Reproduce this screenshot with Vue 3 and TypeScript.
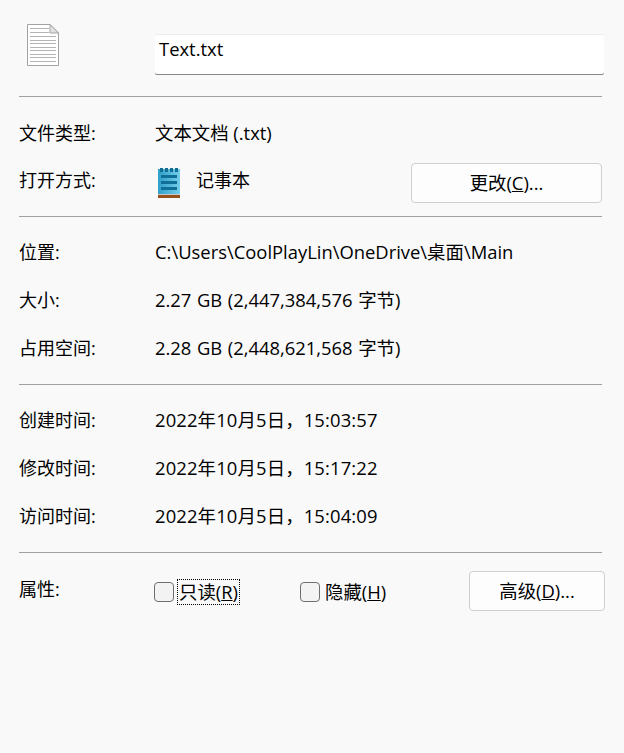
<script setup lang="ts">
interface Row { label: string; value: string }
const locationRows: Row[] = [
  { label: '位置:', value: 'C:\\Users\\CoolPlayLin\\OneDrive\\桌面\\Main' },
  { label: '大小:', value: '2.27 GB (2,447,384,576 字节)' },
  { label: '占用空间:', value: '2.28 GB (2,448,621,568 字节)' },
]
const timeRows: Row[] = [
  { label: '创建时间:', value: '2022年10月5日\uFF0C15:03:57' },
  { label: '修改时间:', value: '2022年10月5日\uFF0C15:17:22' },
  { label: '访问时间:', value: '2022年10月5日\uFF0C15:04:09' },
]
const docLines = [4.5, 8.5, 12.5, 16.5, 19.5, 23.5, 26.5, 30.5, 33.5, 37.5]
</script>

<template>
  <main class="page">
    <section class="head">
      <svg class="file-icon" width="32" height="42" viewBox="0 0 32 42">
        <path d="M0.5 0.5H23L31.5 9V41.5H0.5Z" fill="#fff" stroke="#a3a3a3" />
        <path d="M23 0.5V9H31.5Z" fill="#e2e2e2" stroke="#a3a3a3" />
        <path
          v-for="y in docLines"
          :key="y"
          :d="`M3 ${y}H${y < 9 ? 22 : 29}`"
          stroke="#b4b4b4"
        />
      </svg>
      <div class="name-box">Text.txt</div>
    </section>
    <hr />
    <section class="block">
      <div class="row row-type">
        <span class="label">文件类型:</span>
        <span>文本文档 (.txt)</span>
      </div>
      <div class="row row-open">
        <span class="label raised">打开方式:</span>
        <svg class="pad-icon" width="22" height="30" viewBox="0 0 22 30">
          <defs>
            <linearGradient id="padFill" x1="0" y1="0" x2="1" y2="0">
              <stop offset="0" stop-color="#2f9fc9" />
              <stop offset="1" stop-color="#74cdea" />
            </linearGradient>
          </defs>
          <rect x="0" y="1" width="22" height="25" fill="url(#padFill)" />
          <rect x="0" y="26" width="22" height="1" fill="#c9c9c9" />
          <rect x="0" y="27" width="22" height="3" fill="#96501c" />
          <g fill="#116f97">
            <rect x="2" y="0" width="3" height="4" />
            <rect x="7" y="0" width="3" height="4" />
            <rect x="12" y="0" width="3" height="4" />
            <rect x="17" y="0" width="3" height="4" />
            <rect x="3" y="7" width="16" height="3" />
            <rect x="3" y="13" width="16" height="3" />
            <rect x="3" y="19" width="16" height="3" />
          </g>
        </svg>
        <span class="app-name raised">记事本</span>
        <button class="btn change" type="button">更改(<u>C</u>)...</button>
      </div>
    </section>
    <hr />
    <section class="block triple">
      <div v-for="r in locationRows" :key="r.label" class="row tall">
        <span class="label">{{ r.label }}</span>
        <span class="spaced">{{ r.value }}</span>
      </div>
    </section>
    <hr />
    <section class="block triple">
      <div v-for="r in timeRows" :key="r.label" class="row tall">
        <span class="label">{{ r.label }}</span>
        <span class="stamp">{{ r.value }}</span>
      </div>
    </section>
    <hr />
    <section class="attrs">
      <span class="label attr-label">属性:</span>
      <label class="check readonly">
        <span class="box"></span>
        <span class="focus">只读(<u>R</u>)</span>
      </label>
      <label class="check hidden-attr">
        <span class="box"></span>
        <span>隐藏(<u>H</u>)</span>
      </label>
      <button class="btn advanced" type="button">高级(<u>D</u>)...</button>
    </section>
  </main>
</template>

<style scoped>
.page {
  box-sizing: border-box;
  width: 624px;
  height: 753px;
  padding: 24px 22px 0 19px;
  background: #f9f9f9;
  color: #000;
  font-family: "Open Sans", "Noto Sans CJK SC", sans-serif;
  font-size: 18.4px;
  line-height: 24px;
  overflow: hidden;
}
hr {
  height: 1px;
  margin: 0;
  border: 0;
  background: #a0a0a0;
}
.head {
  display: flex;
  align-items: flex-start;
  height: 72px;
}
.file-icon {
  flex: none;
  margin-left: 8px;
  margin-right: 96px;
}
.name-box {
  box-sizing: border-box;
  flex: none;
  width: 449px;
  height: 41px;
  margin-top: 10px;
  margin-right: -3px;
  padding: 3px 4px;
  background: #fff;
  border-radius: 2px;
  box-shadow: inset 0 -1px #868686, inset 0 1px #ececec;
}
.block {
  display: flex;
  flex-direction: column;
}
.row {
  display: flex;
  align-items: center;
}
.row-type {
  height: 24px;
  margin-top: 24px;
}
.row-open {
  height: 40px;
  margin-top: 18px;
  margin-bottom: 13px;
}
.raised {
  margin-top: -6px;
}
.label {
  flex: none;
  width: 136px;
  font-size: 18px;
}
.spaced {
  word-spacing: 0.8px;
}
.stamp {
  letter-spacing: 0.14px;
}
.pad-icon {
  flex: none;
  margin-left: 3px;
}
.app-name {
  margin-left: 16px;
  font-size: 18px;
}
.btn {
  box-sizing: border-box;
  height: 40px;
  padding: 0;
  background: #fdfdfd;
  border: 1px solid #cfcfcf;
  border-radius: 4px;
  color: #000;
  font: inherit;
}
.change {
  width: 191px;
  margin-left: auto;
}
.triple {
  padding: 11px 0 12px;
}
.tall {
  height: 48px;
}
.attrs {
  display: flex;
  align-items: center;
  height: 76px;
  margin-right: -3px;
}
.attr-label {
  margin-top: -4px;
}
.check {
  display: flex;
  flex: none;
  align-items: center;
  margin-top: 1px;
}
.readonly {
  width: 146px;
  margin-left: -1px;
}
.hidden-attr {
  width: 169px;
}
.hidden-attr .box {
  margin-right: 5px;
}
.box {
  box-sizing: border-box;
  flex: none;
  width: 20px;
  height: 20px;
  margin-right: 4px;
  background: #f3f3f3;
  border: 1px solid #6f6f6f;
  border-radius: 4px;
}
.focus {
  padding: 0 1px;
  outline: 1px dotted #000;
  outline-offset: 0;
}
.advanced {
  width: 136px;
  margin-left: auto;
}
</style>
